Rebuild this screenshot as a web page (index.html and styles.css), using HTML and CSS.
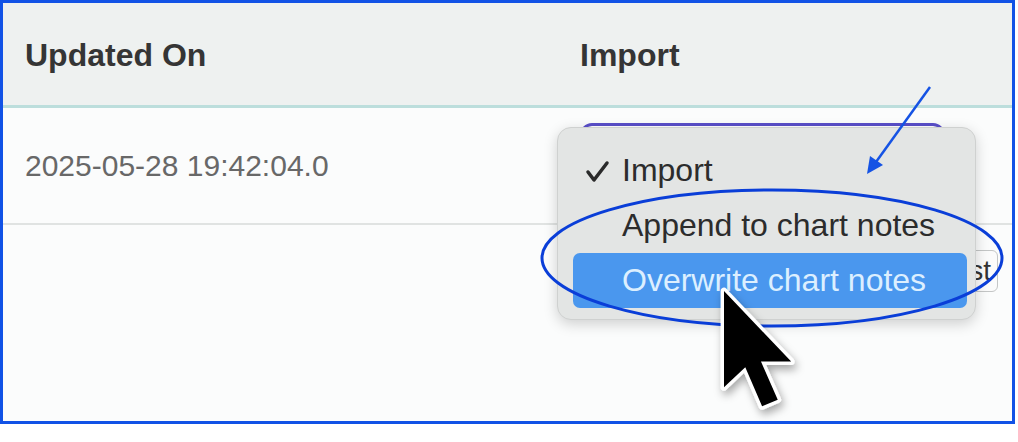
FILE: index.html
```html
<!DOCTYPE html>
<html lang="en">
  <head>
    <meta charset="UTF-8" />
    <meta name="viewport" content="width=device-width, initial-scale=1.0" />
    <title>Chart notes import</title>
    <link rel="stylesheet" href="styles.css">
  </head>
  <body>
    <div class="frame">
      <div class="row head">
        <div class="cell">Updated On</div>
        <div class="cell">Import</div>
      </div>
      <div class="row entry">
        <div class="cell date">2025-05-28 19:42:04.0</div>
        <div class="cell">
          <div class="select"></div>
        </div>
      </div>
      <div class="row extra">
        <div class="cell"></div>
        <div class="cell">
          <button class="action">Request</button>
        </div>
      </div>

      <!-- native select popup -->
      <ul class="menu">
        <li class="item checked">
          <svg class="tick" width="26" height="24" viewBox="0 0 26 24">
            <polyline points="3,12 9,20 22,3" />
          </svg>
          Import
        </li>
        <li class="item">Append to chart notes</li>
        <li class="item active">Overwrite chart notes</li>
      </ul>

      <!-- annotations drawn over the screenshot -->
      <svg class="marks" width="1018" height="442" viewBox="0 0 1018 442">
        <defs>
          <filter id="soft" x="-30%" y="-30%" width="160%" height="160%">
            <feDropShadow dx="2" dy="4" stdDeviation="4" flood-color="#000" flood-opacity="0.35" />
          </filter>
        </defs>
        <line x1="930" y1="87" x2="876" y2="162" stroke="#1553e4" stroke-width="2.5" />
        <polygon points="867,174 870,156 883,165" fill="#1553e4" />
        <ellipse cx="772" cy="258" rx="230" ry="68" fill="none" stroke="#0a3ed8" stroke-width="3" />
        <g transform="translate(724 291) scale(1.12)" filter="url(#soft)">
          <polygon points="0,0 0,86 19,68 34,103 48,97 33,63 60,63"
            fill="#000" stroke="#fff" stroke-width="6" stroke-linejoin="round" paint-order="stroke" />
        </g>
      </svg>
    </div>
  </body>
</html>
```

FILE: styles.css
```css
body {
  margin: 0;
  background-color: #ffffff;
  font-family: "Liberation Sans", Arial, sans-serif;
}

.frame {
  position: relative;
  width: 1009px;
  height: 418px;
  border: 3px solid #1152e6;
  background-color: #fbfcfc;
  overflow: hidden;
}

.row {
  display: grid;
  grid-template-columns: 555px 1fr;
  padding-left: 22px;
}

.head {
  height: 102px;
  align-items: center;
  background-color: #eef1f0;
  border-bottom: 3px solid #bcdedc;
  color: #353535;
  font-size: 32px;
  font-weight: bold;
}

.head .cell {
  padding-top: 2px;
}

.entry {
  height: 115px;
  border-bottom: 2px solid #e0e3e2;
}

.date {
  align-self: center;
  color: #686868;
  font-size: 30px;
}

.select {
  margin-top: 15px;
  width: 359px;
  height: 44px;
  border: 3px solid #5a4fc9;
  border-radius: 12px;
  background-color: #ffffff;
}

.extra .cell:last-child {
  padding-top: 25px;
}

.action {
  display: block;
  width: 418px;
  height: 42px;
  padding: 0 6px 0 0;
  border: 1px solid #c4c6c6;
  border-radius: 6px;
  background-color: #fbfbfb;
  color: #333;
  font-family: "Liberation Sans", Arial, sans-serif;
  font-size: 28px;
  text-align: right;
}

.menu {
  position: absolute;
  left: 554px;
  top: 124px;
  width: 394px;
  height: 165px;
  margin: 0;
  padding: 15px 8px 11px 15px;
  list-style: none;
  background-color: #e3e5e4;
  border: 1px solid #cfd1d0;
  border-radius: 14px;
  box-shadow: 0 4px 14px rgba(0, 0, 0, 0.18);
}

.item {
  position: relative;
  height: 55px;
  line-height: 55px;
  padding-left: 49px;
  border-radius: 7px;
  color: #2c2c2c;
  font-size: 32px;
}

.item.active {
  background-color: #4a97ee;
  color: #dcefff;
}

.tick {
  position: absolute;
  left: 12px;
  top: 17px;
}

.tick polyline {
  fill: none;
  stroke: #2a2a2a;
  stroke-width: 3.5;
  stroke-linecap: round;
  stroke-linejoin: round;
}

.marks {
  position: absolute;
  left: -3px;
  top: -3px;
  pointer-events: none;
  overflow: visible;
}
```
